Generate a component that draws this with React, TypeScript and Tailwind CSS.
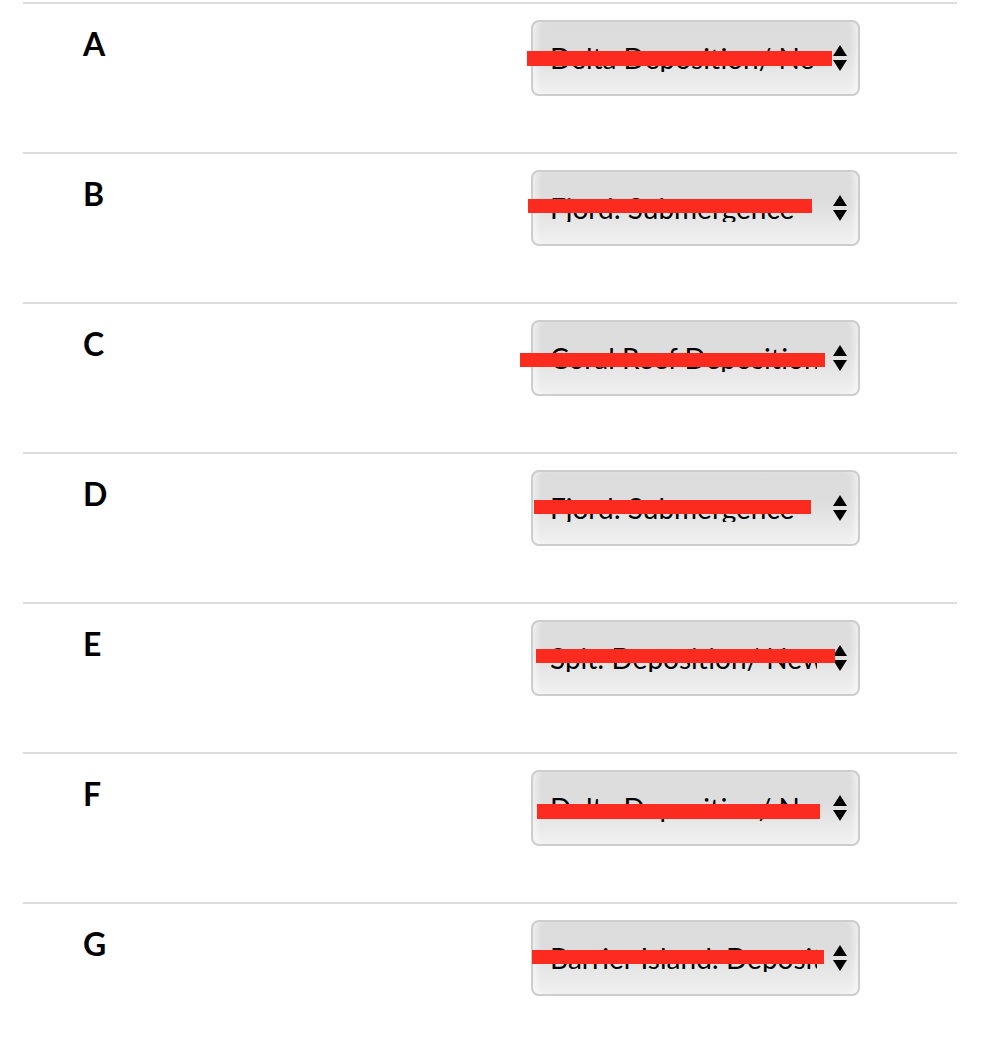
const rows = [
  { letter: 'A', value: 'Delta Deposition/ New Land', bar: { left: -4, top: 31, width: 305, height: 15 } },
  { letter: 'B', value: 'Fjord: Submergence', bar: { left: -3, top: 29, width: 284, height: 14 } },
  { letter: 'C', value: 'Coral Reef Deposition', bar: { left: -11, top: 33, width: 305, height: 14 } },
  { letter: 'D', value: 'Fjord: Submergence', bar: { left: 3, top: 30, width: 277, height: 14 } },
  { letter: 'E', value: 'Spit: Deposition/ New Land', bar: { left: 5, top: 29, width: 299, height: 14 } },
  { letter: 'F', value: 'Delta Deposition/ New Land', bar: { left: 6, top: 34, width: 283, height: 15 } },
  { letter: 'G', value: 'Barrier Island: Deposition', bar: { left: 1, top: 30, width: 292, height: 14 } },
];

function Arrows() {
  return (
    <svg width="14" height="26" viewBox="0 0 14 26" className="shrink-0">
      <path d="M7 0 L14 11 L0 11 Z" fill="#000" />
      <path d="M0 15 L14 15 L7 26 Z" fill="#000" />
    </svg>
  );
}

function FakeSelect({ value, bar }: { value: string; bar: { left: number; top: number; width: number; height: number } }) {
  return (
    <div className="relative">
      <div className="flex h-[76px] w-[329px] items-center overflow-hidden rounded-[8px] border-2 border-[#cdcdcd] bg-[linear-gradient(to_bottom,#dcdcdc_0%,#dddddd_40%,#f1f1f1_100%)] pl-[17px] pr-[11px] shadow-[inset_8px_0_6px_-4px_rgba(255,255,255,0.55),inset_-8px_0_6px_-4px_rgba(255,255,255,0.55)]">
        <div className="mr-[16px] min-w-0 flex-1 overflow-hidden whitespace-nowrap text-[28px] leading-none text-black">{value}</div>
        <Arrows />
      </div>
      <div
        className="absolute bg-[#fb2b20]"
        style={{ left: bar.left, top: bar.top, width: bar.width, height: bar.height }}
      />
    </div>
  );
}

export default function App() {
  return (
    <div className="min-h-[1042px] bg-white pt-[2px] font-['Lato','Liberation_Sans',sans-serif]">
      <div className="ml-[23px] w-[934px]">
        {rows.map((row) => (
          <div key={row.letter} className="flex h-[150px] border-t-2 border-[#dddddd] pt-[16px]">
            <div className="w-[508px] pl-[60px] pt-[8px] text-[32px] font-bold leading-none text-black">{row.letter}</div>
            <FakeSelect value={row.value} bar={row.bar} />
          </div>
        ))}
      </div>
    </div>
  );
}
